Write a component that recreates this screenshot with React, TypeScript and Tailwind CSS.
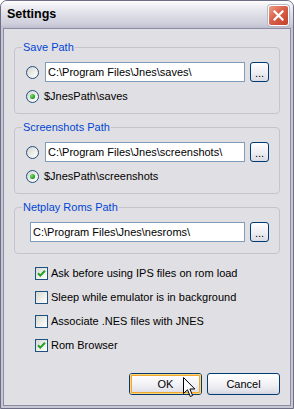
import { type ReactNode } from 'react';

const font = { fontFamily: '"Liberation Sans", Arial, sans-serif' };

function Radio({ checked }: { checked?: boolean }) {
  return (
    <span className="flex h-[13px] w-[13px] shrink-0 items-center justify-center rounded-full border border-[#1c5180] bg-[linear-gradient(135deg,#d4d4ce_0%,#eeeeea_55%,#ffffff_100%)]">
      {checked && (
        <span className="h-[5px] w-[5px] rounded-full bg-[radial-gradient(circle_at_35%_35%,#7be07a_0%,#21a121_60%,#0a7a0a_100%)]" />
      )}
    </span>
  );
}

function Checkbox({ checked }: { checked?: boolean }) {
  return (
    <span className="flex h-[13px] w-[13px] shrink-0 items-center justify-center border border-[#1c5180] bg-[linear-gradient(135deg,#d8d8d2_0%,#f0f0ec_60%,#ffffff_100%)]">
      {checked && (
        <svg width="9" height="9" viewBox="0 0 9 9">
          <polyline points="1,4.2 3.3,6.6 8,1.8" fill="none" stroke="#21a121" strokeWidth="2" />
        </svg>
      )}
    </span>
  );
}

function PathInput({ value }: { value: string }) {
  return (
    <div className="flex h-[20px] flex-1 items-center border border-[#7f9db9] bg-white pl-[2px] text-[11px] leading-[18px] text-black">
      {value}
    </div>
  );
}

function BrowseButton() {
  return (
    <div className="flex h-[20px] w-[19px] shrink-0 items-end justify-center rounded-[3px] border border-[#003c74] bg-[linear-gradient(to_bottom,#ffffff_0%,#f2f2f6_40%,#dcdce6_100%)] pb-[3px] text-[11px] leading-[9px] text-black">
      ...
    </div>
  );
}

function Group({ title, children, className }: { title: string; children: ReactNode; className?: string }) {
  return (
    <fieldset className={`mx-[10px] rounded-[4px] border border-[#c4c4cc] ${className ?? ''}`}>
      <legend className="ml-[7px] px-[1px] text-[11px] leading-[14px] text-[#0046d5]">{title}</legend>
      {children}
    </fieldset>
  );
}

function OptionRow({ checked, label }: { checked?: boolean; label: string }) {
  return (
    <div className="flex h-[24px] items-center gap-[3px] pl-[31px] text-[11px] text-black">
      <Checkbox checked={checked} />
      <span>{label}</span>
    </div>
  );
}

function DialogButton({ label, focused }: { label: string; focused?: boolean }) {
  return (
    <div className="flex h-[22px] w-[73px] items-center justify-center rounded-[3px] border border-[#003c74] bg-[linear-gradient(to_bottom,#ffffff_0%,#f4f4f8_45%,#e2e2ea_85%,#d2d2de_100%)] text-[11px] text-black">
      <div
        className={`flex h-full w-full items-center justify-center rounded-[2px] ${
          focused ? 'shadow-[inset_0_0_0_1px_#fbd37a,inset_0_0_0_2px_#f0a830]' : ''
        }`}
      >
        {label}
      </div>
    </div>
  );
}

export default function App() {
  return (
    <div className="relative h-[409px] w-[294px] bg-white" style={font}>
      <div className="flex h-[409px] w-[294px] flex-col rounded-t-[7px] border border-[#6d6d86] bg-[#c6c6d4]">
        {/* title bar */}
        <div className="flex h-[27px] shrink-0 items-center justify-between rounded-t-[6px] bg-[linear-gradient(to_bottom,#ffffff_0%,#eeeef3_20%,#dcdce6_55%,#cfcfdc_85%,#bdbdcd_100%)] pl-[6px] pr-[4px]">
          <span className="text-[12.5px] font-bold leading-none text-black">Settings</span>
          <div className="mt-[2px] flex h-[21px] w-[21px] items-center justify-center rounded-[3px] border border-white bg-[linear-gradient(135deg,#eba08c_0%,#d9604a_45%,#c2412b_100%)] shadow-[0_0_0_1px_#b8b8c8]">
            <svg width="11" height="11" viewBox="0 0 11 11">
              <path d="M1.5 1.5 L9.5 9.5 M9.5 1.5 L1.5 9.5" stroke="white" strokeWidth="2.2" strokeLinecap="square" />
            </svg>
          </div>
        </div>

        {/* body */}
        <div className="mx-[2px] mb-[2px] flex flex-1 flex-col border border-[#8c8ca2] bg-[#e0dfe3]">
          <Group title="Save Path" className="mt-[11px]">
            <div className="flex flex-col gap-[4px] pb-[7px] pl-[11px] pr-[10px] pt-[8px]">
              <div className="flex h-[20px] items-center">
                <Radio />
                <div className="ml-[6px] flex flex-1 gap-[5px]">
                  <PathInput value="C:\Program Files\Jnes\saves\" />
                  <BrowseButton />
                </div>
              </div>
              <div className="flex h-[20px] items-center gap-[5px] text-[11px] text-black">
                <Radio checked />
                <span>$JnesPath\saves</span>
              </div>
            </div>
          </Group>

          <Group title="Screenshots Path" className="mt-[6px]">
            <div className="flex flex-col gap-[4px] pb-[7px] pl-[11px] pr-[10px] pt-[8px]">
              <div className="flex h-[20px] items-center">
                <Radio />
                <div className="ml-[6px] flex flex-1 gap-[5px]">
                  <PathInput value="C:\Program Files\Jnes\screenshots\" />
                  <BrowseButton />
                </div>
              </div>
              <div className="flex h-[20px] items-center gap-[5px] text-[11px] text-black">
                <Radio checked />
                <span>$JnesPath\screenshots</span>
              </div>
            </div>
          </Group>

          <Group title="Netplay Roms Path" className="mt-[6px]">
            <div className="flex gap-[5px] pb-[11px] pl-[15px] pr-[10px] pt-[8px]">
              <PathInput value="C:\Program Files\Jnes\nesroms\" />
              <BrowseButton />
            </div>
          </Group>

          <div className="mt-[7px] flex flex-col">
            <OptionRow checked label="Ask before using IPS files on rom load" />
            <OptionRow label="Sleep while emulator is in background" />
            <OptionRow label="Associate .NES files with JNES" />
            <OptionRow checked label="Rom Browser" />
          </div>

          <div className="mt-[16px] flex justify-end gap-[5px] pr-[10px]">
            <DialogButton label="OK" focused />
            <DialogButton label="Cancel" />
          </div>
        </div>
      </div>

      {/* mouse pointer over the OK button */}
      <svg className="absolute left-[183px] top-[377px]" width="13" height="21" viewBox="0 0 13 21">
        <path
          d="M0.5 0.5 L0.5 16.5 L4.5 12.8 L7.3 19.5 L9.6 18.5 L6.9 12 L11.8 12 Z"
          fill="white"
          stroke="black"
          strokeWidth="1"
          strokeLinejoin="miter"
        />
      </svg>
    </div>
  );
}
